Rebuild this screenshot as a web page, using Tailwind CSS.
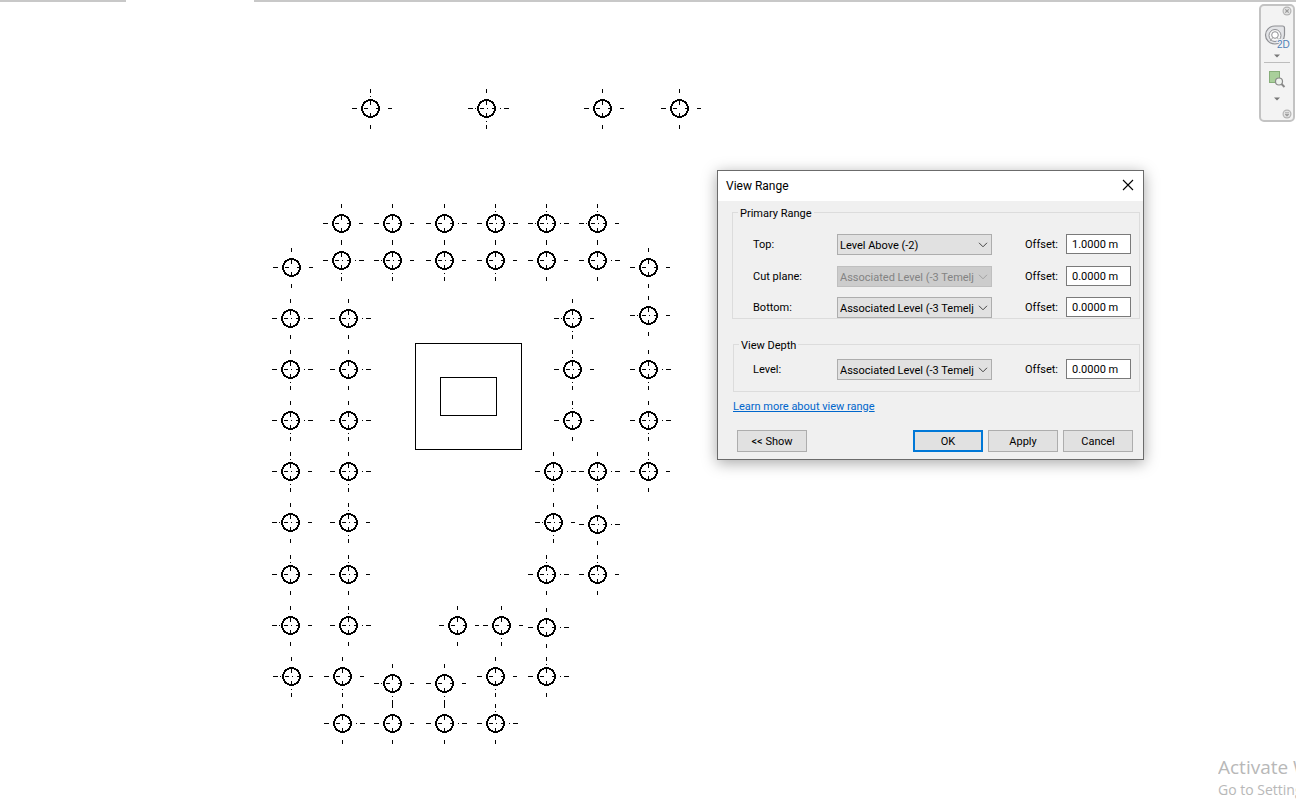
<!DOCTYPE html>
<html lang="en">
<head>
<meta charset="utf-8">
<title>View Range</title>
<script src="https://cdn.jsdelivr.net/npm/@tailwindcss/browser@4"></script>
</head>
<body class="bg-white">
<main class="relative min-h-screen overflow-hidden font-[Roboto,sans-serif] text-[11px] leading-[15px] text-black">
  <div class="flex h-[2px]">
    <div class="w-[126px] bg-[#c8c8c8]"></div>
    <div class="w-[128px]"></div>
    <div class="flex-1 bg-[#c8c8c8]"></div>
  </div>

  <!-- Foundation plan -->
  <svg class="absolute left-0 top-0" width="710" height="805" viewBox="0 0 710 805" fill="none" stroke="#000" shape-rendering="crispEdges" role="img" aria-label="Pile plan">
    <rect x="415.5" y="343.5" width="106" height="106"/>
    <rect x="440.5" y="377.5" width="56" height="38"/>
    <g id="piles"></g>
  </svg>

  <!-- Navigation bar -->
  <nav class="absolute right-px top-[4px] flex w-[36px] flex-col items-center rounded-[5px] border-2 border-[#c3c3c3] bg-[#f3f3f3] pb-px" aria-label="Navigation bar">
    <button class="mr-px flex h-[10px] w-[10px] self-end" aria-label="Close"><svg width="10" height="10" viewBox="0 0 10 10"><circle cx="5" cy="5" r="4.5" fill="#b4b4b4"/><circle cx="5" cy="5" r="3.3" fill="#e4e4e4"/><path d="M3.300 3.300l3.400 3.400M6.700 3.300L3.300 6.700" stroke="#999" stroke-width="1.2"/></svg></button>
    <button class="mt-[8px]" aria-label="2D wheel">
      <svg width="26" height="26" viewBox="0 0 26 26" fill="none" stroke="#8f9094">
        <path d="M11 2h7.500q2 0 2 2v7A9.500 9 0 1 1 11 2z" fill="#e3e4e7" stroke-width="1.200"/>
        <circle cx="11" cy="11.500" r="6" fill="#f7f7f7"/><circle cx="11" cy="11" r="3.300" fill="#fff"/>
        <path d="M6 17l3-3.500M13 13.500l3 3.500" stroke="#a5a5a5"/>
        <text x="13" y="24" font-family="Liberation Sans" font-size="10" fill="#4f7fb5" stroke="#f3f3f3" stroke-width="2" paint-order="stroke">2D</text>
      </svg>
    </button>
    <button class="mt-[3px] h-[5px]" aria-label="Wheel options"><svg width="6" height="4" viewBox="0 0 6 4"><path d="M0 .5h6L3 3.500z" fill="#777"/></svg></button>
    <div class="mt-[4px] h-px w-[26px] bg-[#bdbdbd]"></div>
    <button class="mt-[8px]" aria-label="Zoom region">
      <svg width="18" height="18" viewBox="0 0 18 18" fill="none"><rect x="1.500" y=".5" width="10" height="11" fill="#a9cf9b" stroke="#87ae7a"/><circle cx="11" cy="10.500" r="3.500" fill="#eef2ee" stroke="#888" stroke-width="1.200"/><path d="M13.500 13l3 3" stroke="#888" stroke-width="2"/></svg>
    </button>
    <button class="mt-[7px] h-[5px]" aria-label="Zoom options"><svg width="6" height="4" viewBox="0 0 6 4"><path d="M0 .5h6L3 3.500z" fill="#777"/></svg></button>
    <button class="mr-px mt-[8px] self-end" aria-label="Customize"><svg width="10" height="10" viewBox="0 0 10 10"><circle cx="5" cy="5" r="4.500" fill="#b4b4b4"/><circle cx="5" cy="5" r="3.300" fill="#e4e4e4"/><path d="M3 3.800h4M3.200 5.500h3.600L5 7.200z" stroke="#999" fill="#999" stroke-width=".8"/></svg></button>
  </nav>

  <!-- View Range dialog -->
  <form role="dialog" aria-labelledby="dialog-title" class="absolute left-[717px] top-[170px] flex w-[427px] flex-col border border-[#6b6b6b] bg-[#f0f0f0] shadow-[0_3px_14px_rgba(0,0,0,0.35)]">
    <header class="flex h-[30px] items-center justify-between bg-white pl-[8px] pr-[9px]">
      <h1 id="dialog-title" class="pt-px text-[12px]">View Range</h1>
      <button type="button" class="pb-[2px]" aria-label="Close"><svg width="12" height="12" viewBox="0 0 12 12" stroke="#000" fill="none" stroke-width="1.100"><path d="M1 1l10 10M11 1L1 11"/></svg></button>
    </header>

    <fieldset class="ml-[14px] mr-[3px] mt-[4px] border border-[#dcdcdc]">
      <legend class="ml-[5px] h-[15px] px-[2px] leading-[17px]">Primary Range</legend>
      <div class="flex flex-col gap-[11px] pl-[20px] pr-[8px] pt-[14px]">
        <div class="flex h-[21px]">
          <label for="s1" class="w-[84px] leading-[22px]">Top:</label>
          <div class="relative w-[155px]">
            <select id="s1" class="block h-[21px] w-full appearance-none overflow-hidden border border-[#adadad] bg-[#e1e1e1] pl-[2px] pr-[16px] pt-px"><option>Level Above (-2)</option></select>
            <svg class="pointer-events-none absolute right-[4px] top-[8px]" width="10" height="6" viewBox="0 0 10 6" fill="none" stroke="#444"><path d="M1 .8l4 4 4-4"/></svg>
          </div>
          <label for="o1" class="ml-auto mr-[8px] leading-[22px]">Offset:</label>
          <input id="o1" value="1.0000 m" class="h-[20px] w-[65px] border border-[#7a7a7a] bg-white px-[5px]">
        </div>
        <div class="flex h-[21px]">
          <label for="s2" class="w-[84px] leading-[22px]">Cut plane:</label>
          <div class="relative w-[155px]">
            <select id="s2" disabled class="block h-[21px] w-full appearance-none overflow-hidden border border-[#bfbfbf] bg-[#cccccc] pl-[2px] pr-[16px] pt-px text-[#838383] opacity-100"><option>Associated Level (-3 Temelj</option></select>
            <svg class="pointer-events-none absolute right-[4px] top-[8px]" width="10" height="6" viewBox="0 0 10 6" fill="none" stroke="#a0a0a0"><path d="M1 .8l4 4 4-4"/></svg>
          </div>
          <label for="o2" class="ml-auto mr-[8px] leading-[22px]">Offset:</label>
          <input id="o2" value="0.0000 m" class="h-[20px] w-[65px] border border-[#7a7a7a] bg-white px-[5px]">
        </div>
        <div class="-mt-px flex h-[21px]">
          <label for="s3" class="w-[84px] leading-[22px]">Bottom:</label>
          <div class="relative w-[155px]">
            <select id="s3" class="block h-[21px] w-full appearance-none overflow-hidden border border-[#adadad] bg-[#e1e1e1] pl-[2px] pr-[16px] pt-px"><option>Associated Level (-3 Temelj</option></select>
            <svg class="pointer-events-none absolute right-[4px] top-[8px]" width="10" height="6" viewBox="0 0 10 6" fill="none" stroke="#444"><path d="M1 .8l4 4 4-4"/></svg>
          </div>
          <label for="o3" class="ml-auto mr-[8px] leading-[22px]">Offset:</label>
          <input id="o3" value="0.0000 m" class="h-[20px] w-[65px] border border-[#7a7a7a] bg-white px-[5px]">
        </div>
      </div>
    </fieldset>

    <fieldset class="ml-[15px] mr-[3px] mt-[18px] border border-[#dcdcdc]">
      <legend class="ml-[5px] h-[15px] px-[2px] leading-[17px]">View Depth</legend>
      <div class="flex h-[39px] pb-[11px] pl-[19px] pr-[8px] pt-[7px]">
        <label for="s4" class="w-[84px] leading-[22px]">Level:</label>
        <div class="relative w-[155px]">
          <select id="s4" class="block h-[21px] w-full appearance-none overflow-hidden border border-[#adadad] bg-[#e1e1e1] pl-[2px] pr-[16px] pt-px"><option>Associated Level (-3 Temelj</option></select>
          <svg class="pointer-events-none absolute right-[4px] top-[8px]" width="10" height="6" viewBox="0 0 10 6" fill="none" stroke="#444"><path d="M1 .8l4 4 4-4"/></svg>
        </div>
        <label for="o4" class="ml-auto mr-[8px] leading-[22px]">Offset:</label>
        <input id="o4" value="0.0000 m" class="h-[20px] w-[65px] border border-[#7a7a7a] bg-white px-[5px]">
      </div>
    </fieldset>

    <a href="#" class="ml-[15px] mt-[7px] self-start text-[#0066cc] underline">Learn more about view range</a>
    <footer class="mb-[7px] ml-[19px] mr-[10px] mt-[16px] flex gap-[5px]">
      <button type="button" class="mr-auto h-[22px] w-[70px] border border-[#adadad] bg-[#e1e1e1]">&lt;&lt; Show</button>
      <button type="submit" class="h-[22px] w-[70px] border-2 border-[#0078d7] bg-[#e1e1e1]">OK</button>
      <button type="button" class="h-[22px] w-[70px] border border-[#adadad] bg-[#e1e1e1]">Apply</button>
      <button type="button" class="h-[22px] w-[70px] border border-[#adadad] bg-[#e1e1e1]">Cancel</button>
    </footer>
  </form>

  <aside class="absolute bottom-[6px] right-0 w-[78px] overflow-hidden whitespace-nowrap font-['Open_Sans',sans-serif] text-[#b8b8b8]">
    <p class="text-[19px] leading-[26px]">Activate Windows</p>
    <p class="text-[14px] leading-[19px]">Go to Settings to activate Windows.</p>
  </aside>
</main>
<script>
// x, y of each pile; letters add a centre-line dot on the left, right, top, bottom or middle
const piles = [
  [370,108,'t'],[486,108,'lrbm'],[602,108,''],[679,108,''],
  [341,223,''],[392,223,''],[444,223,'r'],[495,223,'rtm'],[546,223,'lrtm'],[597,223,'ltm'],
  [341,260,'rbm'],[392,260,'lbm'],[444,260,'bm'],[495,260,'b'],[546,260,''],[597,260,'r'],
  [291,267,''],[290,318,'rm'],[290,369,'rbm'],[290,420,'rbm'],[290,471,'tbm'],[290,522,'lm'],[290,574,'t'],[290,625,'lm'],[291,676,'lbm'],
  [348,318,'rm'],[348,369,'r'],[348,420,'rb'],[348,471,'rbm'],[348,522,'tbm'],[348,574,'tm'],[348,625,'rtm'],
  [648,267,''],[648,315,'lm'],[648,369,'rbm'],[648,420,'rbm'],[648,471,'tm'],
  [572,318,'lbm'],[572,369,'tbm'],[572,420,'t'],
  [553,471,'rbm'],[553,522,'lbm'],[597,471,'rbm'],[597,524,'rm'],
  [546,574,'rtm'],[597,574,'tm'],[457,625,''],[501,625,'b'],[546,627,'r'],
  [342,676,'b'],[392,683,'lb'],[444,683,'b'],[495,676,'b'],[546,676,'rt'],
  [342,723,'r'],[392,723,''],[444,723,'r'],[495,723,'rtm']
];
const dots = { l: 'M-11.500 0h1', r: 'M13.500 0h1', t: 'M0-12.500v1', b: 'M0 12.500v1', m: 'M.500 0h1' };
document.getElementById('piles').innerHTML = piles.map(([x, y, f]) =>
  `<g transform="translate(${x + .5} ${y + .5})"><circle r="8.500" stroke-width="1.900"/>` +
  `<path d="M-18.500 0h5M-6.500 0h4M5.500 0h4${f.includes('r') ? 'M17.500 0h5' : 'M17.500 0h4'}M0-19.500v4M0-8.500v5M0 4.500v4M0 16.500v4${[...f].map(c => dots[c]).join('')}"/></g>`).join('');
</script>
</body>
</html>
